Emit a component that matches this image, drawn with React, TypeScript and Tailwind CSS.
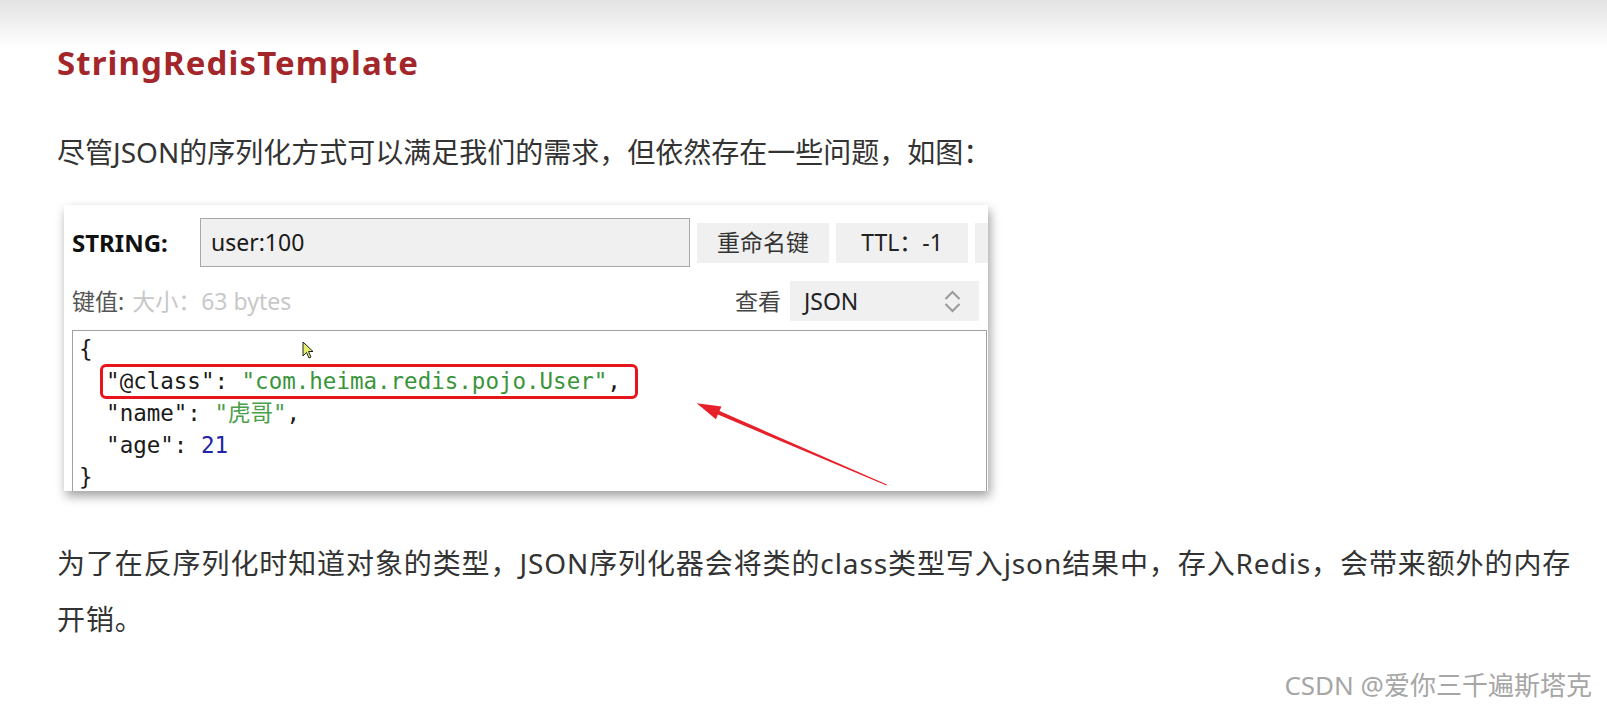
import React from "react";

const sans = "font-['Noto_Sans','Noto_Sans_CJK_SC',sans-serif]";

const Chevrons = () => (
  <svg width="17" height="23" viewBox="0 0 17 23" fill="none">
    <polyline points="1.5,9 8.5,2 15.5,9" stroke="#9a9a9a" strokeWidth="2" />
    <polyline points="1.5,14 8.5,21 15.5,14" stroke="#9a9a9a" strokeWidth="2" />
  </svg>
);

const Pointer = () => (
  <svg width="13" height="19" viewBox="0 0 13 19">
    <path
      d="M1 1 L1 15 L4.5 11.5 L7 17 L9 16 L6.5 10.5 L11 10.5 Z"
      fill="#e3ee6a"
      stroke="#222"
      strokeWidth="1"
      strokeLinejoin="round"
    />
  </svg>
);

const RedisCard = () => {
  return (
    <div className="relative ml-[7px] mt-[25px] flex h-[286px] w-[924px] flex-col overflow-hidden bg-white pl-[8px] pr-[1px] pt-[13px] pb-[1px] shadow-[2px_5px_10px_rgba(0,0,0,0.38)]">
      <div className={`flex h-[49px] shrink-0 items-center ${sans}`}>
        <div className="w-[128px] shrink-0 text-[24px] font-bold text-[#111]">STRING:</div>
        <div className="flex h-[49px] w-[490px] shrink-0 items-center border border-[#a8a8a8] bg-[#f0f0f0] pl-[10px] text-[23px] text-[#1a1a1a]">
          user:100
        </div>
        <div className="ml-[7px] flex h-[40px] w-[132px] shrink-0 items-center justify-center bg-[#f0f0f0] text-[23px] text-[#333]">
          重命名键
        </div>
        <div className="ml-[7px] flex h-[40px] w-[132px] shrink-0 items-center justify-center bg-[#f0f0f0] text-[23px] text-[#222]">
          TTL：-1
        </div>
        <div className="ml-[7px] h-[40px] w-[132px] shrink-0 bg-[#f0f0f0]" />
      </div>

      <div className={`mt-[14px] flex h-[40px] shrink-0 items-center pr-[8px] text-[23px] ${sans}`}>
        <span className="text-[#555]">键值:</span>
        <span className="ml-[8px] text-[#c8c8c8]">大小：63 bytes</span>
        <div className="flex-1" />
        <span className="mr-[9px] text-[#444]">查看</span>
        <div className="flex h-[40px] w-[189px] items-center justify-between bg-[#f0f0f0] pl-[14px] pr-[18px] text-[#222]">
          <span>JSON</span>
          <Chevrons />
        </div>
      </div>

      <div className="relative mt-[9px] flex-1 border border-[#a0a0a0] pl-[6px] pt-[2px] font-['DejaVu_Sans_Mono','Noto_Sans_CJK_SC',monospace] text-[22.5px] leading-[32px] whitespace-pre text-[#1a1a1a]">
        <div>{"{"}</div>
        <div>
          {'  "@class": '}
          <span className="text-[#3a943a]">"com.heima.redis.pojo.User"</span>,
        </div>
        <div>
          {'  "name": '}
          <span className="text-[#4aa04a]">"虎哥"</span>,
        </div>
        <div>
          {'  "age": '}
          <span className="text-[#2323a8]">21</span>
        </div>
        <div>{"}"}</div>

        <div className="absolute left-[27px] top-[33px] h-[35px] w-[538px] rounded-[6px] border-[3px] border-[#e8141c]" />
        <div className="absolute left-[229px] top-[10px]">
          <Pointer />
        </div>
      </div>
    </div>
  );
};

export default function App() {
  return (
    <div
      className={`relative h-[708px] w-[1607px] overflow-hidden bg-[linear-gradient(to_bottom,#e3e3e3,#ffffff_48px)] pl-[57px] pt-[43px] ${sans}`}
    >
      <h2 className="text-[33px] font-bold leading-[40px] tracking-[1.1px] text-[#a3262a]">
        StringRedisTemplate
      </h2>
      <p className="mt-[41px] text-[28px] leading-[56px] text-[#333]">
        尽管JSON的序列化方式可以满足我们的需求，但依然存在一些问题，如图：
      </p>

      <RedisCard />

      <p className="mt-[44px] text-[28px] leading-[56px] tracking-[0.9px] text-[#333]">
        为了在反序列化时知道对象的类型，JSON序列化器会将类的class类型写入json结果中，存入Redis，会带来额外的内存
        <br />
        开销。
      </p>

      <svg className="pointer-events-none absolute left-0 top-0" width="1607" height="708">
        <polygon
          points="696.7,403.3 721.5,406.4 719.5,411.0 886.9,484.4 886.5,485.6 717.9,414.6 715.9,419.2"
          fill="#e8202a"
        />
      </svg>

      <div className="absolute bottom-[9px] right-[15px] text-[26px] leading-[28px] text-[#a6a6a6]">
        CSDN @爱你三千遍斯塔克
      </div>
    </div>
  );
}
